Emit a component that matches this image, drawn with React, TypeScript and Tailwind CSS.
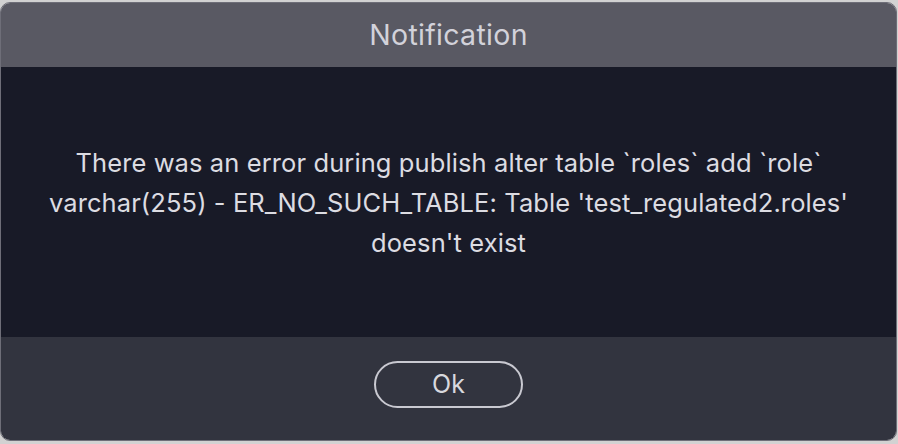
export default function App() {
  return (
    <div className="w-[898px] h-[444px] bg-[#d2d2d2] pt-[2px] overflow-hidden" style={{ fontFamily: 'Inter, "Noto Sans", sans-serif' }}>
      <div className="w-[897px] h-[439px] rounded-[10px] border border-[#6e6e78] overflow-hidden flex flex-col">
        <div className="h-[64px] bg-[#595963] flex items-center justify-center">
          <span className="text-[28.5px] text-[#d2d2da] tracking-[0.3px]">Notification</span>
        </div>
        <div className="h-[270px] bg-[#181a27] flex items-center justify-center">
          <p className="text-[25.5px] leading-[40px] text-[#dcdce2] text-center whitespace-nowrap pt-[2px] tracking-[0.1px]">
            There was an error during publish alter table `roles` add `role`
            <br />
            varchar(255) - ER_NO_SUCH_TABLE: Table 'test_regulated2.roles'
            <br />
            doesn't exist
          </p>
        </div>
        <div className="flex-1 bg-[#32343f] flex justify-center pt-[24px]">
          <button className="w-[149px] h-[47px] rounded-full border-2 border-[#c9c9d1] text-[25px] text-[#d8d8de] flex items-center justify-center">
            Ok
          </button>
        </div>
      </div>
    </div>
  );
}
